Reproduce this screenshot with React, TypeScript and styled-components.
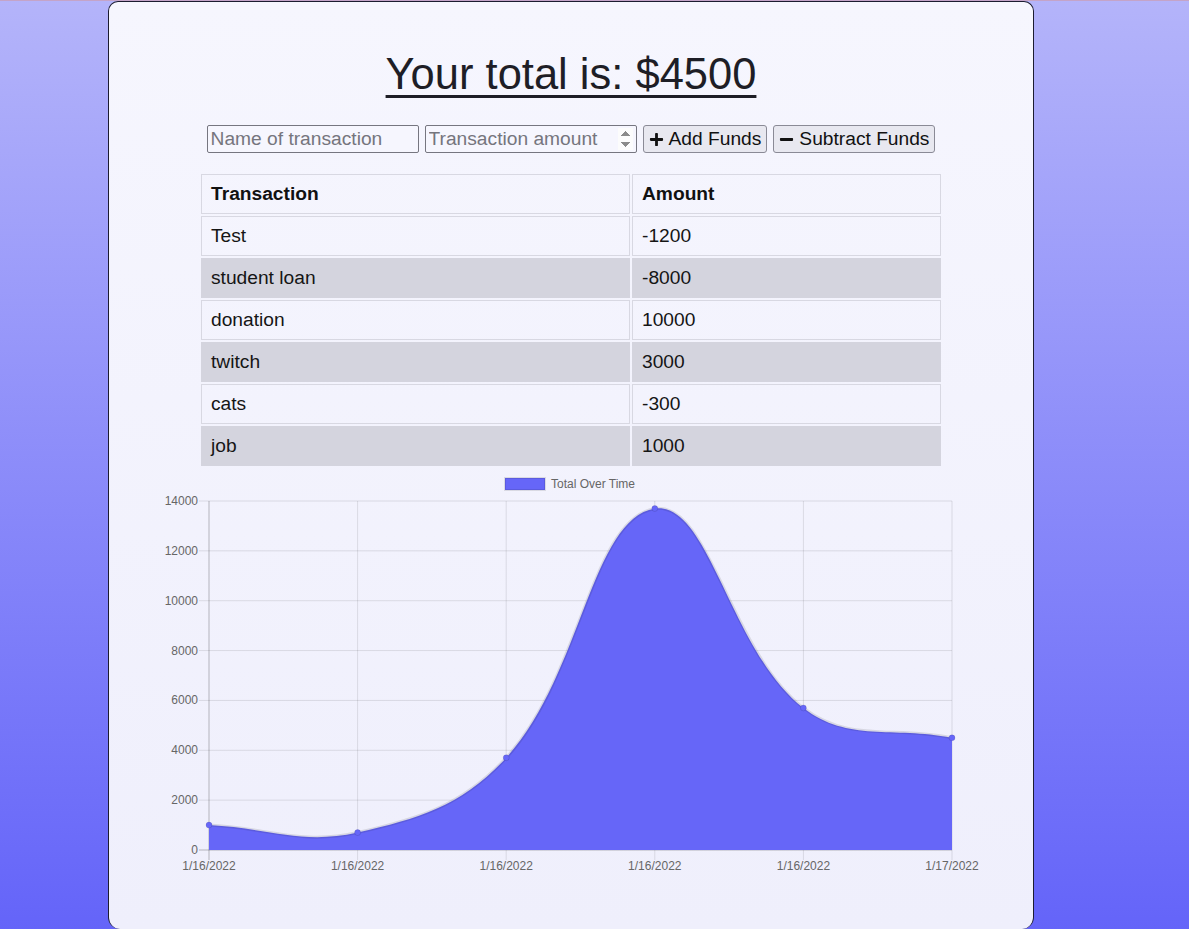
import React from 'react'
import styled, { createGlobalStyle } from 'styled-components'
import { FaPlus, FaMinus } from 'react-icons/fa'

const GlobalStyle = createGlobalStyle`
  html, body {
    margin: 0;
    padding: 0;
  }
  body {
    min-height: 929px;
    background: linear-gradient(180deg, #b4b4fa 0%, #6464f9 100%);
    border-top: 1px solid #c4a4c8;
    font-family: 'Liberation Sans', Arial, sans-serif;
    color: #222;
  }
`

const Page = styled.div`
  padding-left: 108px;
`

const Card = styled.main`
  width: 926px;
  min-height: 928px;
  box-sizing: border-box;
  border: 1px solid #1c1c30;
  border-bottom: none;
  border-radius: 10px 10px 12px 12px;
  background: linear-gradient(180deg, #f6f6fe 0%, #efeffc 100%);
  display: flex;
  flex-direction: column;
  align-items: center;
`

const Title = styled.h1`
  margin: 48px 0 0;
  font-size: 43.5px;
  line-height: 48px;
  font-weight: 400;
  text-decoration: underline;
  text-decoration-thickness: 3px;
  text-underline-offset: 6px;
  color: #1e1e26;
`

const Controls = styled.form`
  display: flex;
  gap: 6px;
  margin-top: 27px;
`

const Field = styled.input`
  width: 212px;
  height: 28px;
  box-sizing: border-box;
  padding: 1px 3px;
  border: 1px solid #767680;
  border-radius: 2px;
  background: #f6f6fe;
  font-family: 'Liberation Sans', Arial, sans-serif;
  font-size: 19.2px;
  color: #222;

  &::placeholder {
    color: #75757d;
  }

  &::-webkit-inner-spin-button {
    opacity: 1;
  }
`

const Button = styled.button`
  height: 28px;
  box-sizing: border-box;
  display: flex;
  align-items: center;
  gap: 5px;
  padding: 0 5px;
  white-space: nowrap;
  border: 1px solid #8a8a96;
  border-radius: 3px;
  background: #e8e8f0;
  font-family: 'Liberation Sans', Arial, sans-serif;
  font-size: 19.2px;
  color: #111;

  svg {
    width: 15px;
    height: 15px;
    flex-shrink: 0;
  }
`

const Table = styled.table`
  margin-top: 19px;
  border-spacing: 2px;
  font-size: 19.2px;
`

const HeadCell = styled.th<{ $width: number }>`
  width: ${(p) => p.$width}px;
  box-sizing: border-box;
  height: 40px;
  padding: 8px 9px;
  border: 1px solid #d8d8e2;
  text-align: left;
  font-weight: 700;
  color: #111;
`

const Cell = styled.td<{ $striped: boolean }>`
  box-sizing: border-box;
  height: 40px;
  padding: 8px 9px;
  border: 1px solid ${(p) => (p.$striped ? '#d4d4de' : '#d8d8e2')};
  background: ${(p) => (p.$striped ? '#d4d4de' : 'transparent')};
  color: #151515;
`

const ChartBox = styled.svg`
  display: block;
  width: 924px;
  height: 420px;
  font-family: 'Liberation Sans', Arial, sans-serif;
`

const transactions = [
  { name: 'Test', value: -1200 },
  { name: 'student loan', value: -8000 },
  { name: 'donation', value: 10000 },
  { name: 'twitch', value: 3000 },
  { name: 'cats', value: -300 },
  { name: 'job', value: 1000 },
]

const X0 = 100
const X1 = 843
const Y0 = 33
const Y1 = 382
const MAX = 14000

type Pt = { x: number; y: number }

// chart.js style spline, tension 0.4
const buildCurve = (pts: Pt[]) => {
  const t = 0.4
  const ctrl = pts.map((cur, i) => {
    const prev = pts[i - 1] || cur
    const next = pts[i + 1] || cur
    const d01 = Math.hypot(cur.x - prev.x, cur.y - prev.y)
    const d12 = Math.hypot(next.x - cur.x, next.y - cur.y)
    const total = d01 + d12 || 1
    const fa = (t * d01) / total
    const fb = (t * d12) / total
    return {
      prev: { x: cur.x - fa * (next.x - prev.x), y: cur.y - fa * (next.y - prev.y) },
      next: { x: cur.x + fb * (next.x - prev.x), y: cur.y + fb * (next.y - prev.y) },
    }
  })
  let d = `M${pts[0].x},${pts[0].y}`
  for (let i = 1; i < pts.length; i++) {
    const a = ctrl[i - 1].next
    const b = ctrl[i].prev
    d += ` C${a.x},${Math.min(Y1, Math.max(Y0, a.y))} ${b.x},${Math.min(Y1, Math.max(Y0, b.y))} ${pts[i].x},${pts[i].y}`
  }
  return d
}

const Chart: React.FC = () => {
  let running = 0
  const totals = [...transactions].reverse().map((tx) => (running += tx.value))
  const labels = ['1/16/2022', '1/16/2022', '1/16/2022', '1/16/2022', '1/16/2022', '1/17/2022']
  const step = (X1 - X0) / (totals.length - 1)
  const pts = totals.map((v, i) => ({ x: X0 + i * step, y: Y1 - (v / MAX) * (Y1 - Y0) }))
  const line = buildCurve(pts)
  const area = `${line} L${X1},${Y1} L${X0},${Y1} Z`
  const yTicks = [0, 2000, 4000, 6000, 8000, 10000, 12000, 14000]

  return (
    <ChartBox viewBox="0 0 924 420">
      <rect x={396} y={10} width={40} height={12} fill="#6666f8" stroke="rgba(0,0,0,0.1)" strokeWidth={2} />
      <text x={442} y={20} fontSize={12} fill="#666">
        Total Over Time
      </text>

      {yTicks.map((v) => {
        const y = Y1 - (v / MAX) * (Y1 - Y0)
        return (
          <g key={v}>
            <line x1={X0 - 10} x2={X1} y1={y} y2={y} stroke={v === 0 ? 'rgba(0,0,0,0.25)' : 'rgba(0,0,0,0.1)'} />
            <text x={X0 - 11} y={y + 4} fontSize={12} fill="#666" textAnchor="end">
              {v}
            </text>
          </g>
        )
      })}

      {labels.map((label, i) => {
        const x = X0 + i * step
        return (
          <g key={i}>
            <line x1={x} x2={x} y1={Y0} y2={Y1 + 10} stroke={i === 0 ? 'rgba(0,0,0,0.25)' : 'rgba(0,0,0,0.1)'} />
            <text x={x} y={Y1 + 20} fontSize={12} fill="#666" textAnchor="middle">
              {label}
            </text>
          </g>
        )
      })}

      <path d={area} fill="#6666f8" />
      <path d={line} fill="none" stroke="rgba(0,0,0,0.1)" strokeWidth={3} />
      {pts.map((p, i) => (
        <circle key={i} cx={p.x} cy={p.y} r={3} fill="#6666f8" stroke="rgba(0,0,0,0.1)" />
      ))}
    </ChartBox>
  )
}

const App: React.FC = () => {
  return (
    <>
      <GlobalStyle />
      <Page>
        <Card>
          <Title>Your total is: $4500</Title>
          <Controls onSubmit={(e) => e.preventDefault()}>
            <Field type="text" placeholder="Name of transaction" />
            <Field type="number" placeholder="Transaction amount" />
            <Button type="button">
              <FaPlus /> Add Funds
            </Button>
            <Button type="button">
              <FaMinus /> Subtract Funds
            </Button>
          </Controls>
          <Table>
            <thead>
              <tr>
                <HeadCell $width={429}>Transaction</HeadCell>
                <HeadCell $width={309}>Amount</HeadCell>
              </tr>
            </thead>
            <tbody>
              {transactions.map((tx, i) => (
                <tr key={tx.name}>
                  <Cell $striped={i % 2 === 1}>{tx.name}</Cell>
                  <Cell $striped={i % 2 === 1}>{tx.value}</Cell>
                </tr>
              ))}
            </tbody>
          </Table>
          <Chart />
        </Card>
      </Page>
    </>
  )
}

export default App
